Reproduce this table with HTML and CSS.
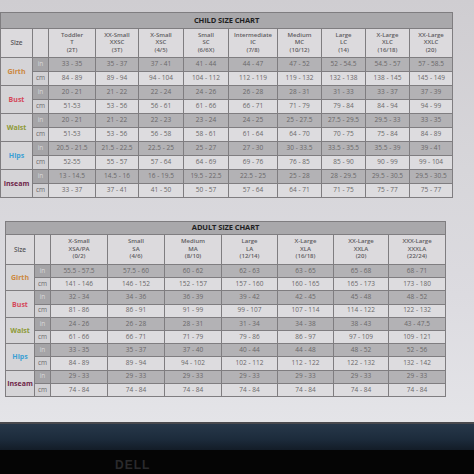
FILE: index.html
```html
<!DOCTYPE html>
<html>
<head>
<meta charset="utf-8">
<link rel="stylesheet" href="styles.css">
</head>
<body>
<div class="screen">
  <table class="chart child">
    <colgroup>
      <col style="width:32px"><col style="width:16px">
      <col style="width:47px"><col style="width:43px"><col style="width:45px"><col style="width:45px"><col style="width:49px"><col style="width:44px"><col style="width:44px"><col style="width:44px"><col style="width:43px">
    </colgroup>
    <tr class="title"><td colspan="11">CHILD SIZE CHART</td></tr>
    <tr class="head">
      <td class="size">Size</td><td class="blank"></td>
      <td>Toddler<br>T<br>(2T)</td>
      <td>XX-Small<br>XXSC<br>(3T)</td>
      <td>X-Small<br>XSC<br>(4/5)</td>
      <td>Small<br>SC<br>(6/6X)</td>
      <td>Intermediate<br>IC<br>(7/8)</td>
      <td>Medium<br>MC<br>(10/12)</td>
      <td>Large<br>LC<br>(14)</td>
      <td>X-Large<br>XLC<br>(16/18)</td>
      <td>XX-Large<br>XXLC<br>(20)</td>
    </tr>
    <tr class="in"><td rowspan="2" class="lab girth">Girth</td><td class="u">in</td><td>33 - 35</td><td>35 - 37</td><td>37 - 41</td><td>41 - 44</td><td>44 - 47</td><td>47 - 52</td><td>52 - 54.5</td><td>54.5 - 57</td><td>57 - 58.5</td></tr>
    <tr class="cm"><td class="u">cm</td><td>84 - 89</td><td>89 - 94</td><td>94 - 104</td><td>104 - 112</td><td>112 - 119</td><td>119 - 132</td><td>132 - 138</td><td>138 - 145</td><td>145 - 149</td></tr>
    <tr class="in"><td rowspan="2" class="lab bust">Bust</td><td class="u">in</td><td>20 - 21</td><td>21 - 22</td><td>22 - 24</td><td>24 - 26</td><td>26 - 28</td><td>28 - 31</td><td>31 - 33</td><td>33 - 37</td><td>37 - 39</td></tr>
    <tr class="cm"><td class="u">cm</td><td>51-53</td><td>53 - 56</td><td>56 - 61</td><td>61 - 66</td><td>66 - 71</td><td>71 - 79</td><td>79 - 84</td><td>84 - 94</td><td>94 - 99</td></tr>
    <tr class="in"><td rowspan="2" class="lab waist">Waist</td><td class="u">in</td><td>20 - 21</td><td>21 - 22</td><td>22 - 23</td><td>23 - 24</td><td>24 - 25</td><td>25 - 27.5</td><td>27.5 - 29.5</td><td>29.5 - 33</td><td>33 - 35</td></tr>
    <tr class="cm"><td class="u">cm</td><td>51-53</td><td>53 - 56</td><td>56 - 58</td><td>58 - 61</td><td>61 - 64</td><td>64 - 70</td><td>70 - 75</td><td>75 - 84</td><td>84 - 89</td></tr>
    <tr class="in"><td rowspan="2" class="lab hips">Hips</td><td class="u">in</td><td>20.5 - 21.5</td><td>21.5 - 22.5</td><td>22.5 - 25</td><td>25 - 27</td><td>27 - 30</td><td>30 - 33.5</td><td>33.5 - 35.5</td><td>35.5 - 39</td><td>39 - 41</td></tr>
    <tr class="cm"><td class="u">cm</td><td>52-55</td><td>55 - 57</td><td>57 - 64</td><td>64 - 69</td><td>69 - 76</td><td>76 - 85</td><td>85 - 90</td><td>90 - 99</td><td>99 - 104</td></tr>
    <tr class="in"><td rowspan="2" class="lab inseam">Inseam</td><td class="u">in</td><td>13 - 14.5</td><td>14.5 - 16</td><td>16 - 19.5</td><td>19.5 - 22.5</td><td>22.5 - 25</td><td>25 - 28</td><td>28 - 29.5</td><td>29.5 - 30.5</td><td>29.5 - 30.5</td></tr>
    <tr class="cm"><td class="u">cm</td><td>33 - 37</td><td>37 - 41</td><td>41 - 50</td><td>50 - 57</td><td>57 - 64</td><td>64 - 71</td><td>71 - 75</td><td>75 - 77</td><td>75 - 77</td></tr>
  </table>

  <table class="chart adult">
    <colgroup>
      <col style="width:29px"><col style="width:16px">
      <col style="width:57px"><col style="width:57px"><col style="width:57px"><col style="width:56px"><col style="width:56px"><col style="width:55px"><col style="width:57px">
    </colgroup>
    <tr class="title"><td colspan="9">ADULT SIZE CHART</td></tr>
    <tr class="head">
      <td class="size">Size</td><td class="blank"></td>
      <td>X-Small<br>XSA/PA<br>(0/2)</td>
      <td>Small<br>SA<br>(4/6)</td>
      <td>Medium<br>MA<br>(8/10)</td>
      <td>Large<br>LA<br>(12/14)</td>
      <td>X-Large<br>XLA<br>(16/18)</td>
      <td>XX-Large<br>XXLA<br>(20)</td>
      <td>XXX-Large<br>XXXLA<br>(22/24)</td>
    </tr>
    <tr class="in"><td rowspan="2" class="lab girth">Girth</td><td class="u">in</td><td>55.5 - 57.5</td><td>57.5 - 60</td><td>60 - 62</td><td>62 - 63</td><td>63 - 65</td><td>65 - 68</td><td>68 - 71</td></tr>
    <tr class="cm"><td class="u">cm</td><td>141 - 146</td><td>146 - 152</td><td>152 - 157</td><td>157 - 160</td><td>160 - 165</td><td>165 - 173</td><td>173 - 180</td></tr>
    <tr class="in"><td rowspan="2" class="lab bust">Bust</td><td class="u">in</td><td>32 - 34</td><td>34 - 36</td><td>36 - 39</td><td>39 - 42</td><td>42 - 45</td><td>45 - 48</td><td>48 - 52</td></tr>
    <tr class="cm"><td class="u">cm</td><td>81 - 86</td><td>86 - 91</td><td>91 - 99</td><td>99 - 107</td><td>107 - 114</td><td>114 - 122</td><td>122 - 132</td></tr>
    <tr class="in"><td rowspan="2" class="lab waist">Waist</td><td class="u">in</td><td>24 - 26</td><td>26 - 28</td><td>28 - 31</td><td>31 - 34</td><td>34 - 38</td><td>38 - 43</td><td>43 - 47.5</td></tr>
    <tr class="cm"><td class="u">cm</td><td>61 - 66</td><td>66 - 71</td><td>71 - 79</td><td>79 - 86</td><td>86 - 97</td><td>97 - 109</td><td>109 - 121</td></tr>
    <tr class="in"><td rowspan="2" class="lab hips">Hips</td><td class="u">in</td><td>33 - 35</td><td>35 - 37</td><td>37 - 40</td><td>40 - 44</td><td>44 - 48</td><td>48 - 52</td><td>52 - 56</td></tr>
    <tr class="cm"><td class="u">cm</td><td>84 - 89</td><td>89 - 94</td><td>94 - 102</td><td>102 - 112</td><td>112 - 122</td><td>122 - 132</td><td>132 - 142</td></tr>
    <tr class="in"><td rowspan="2" class="lab inseam">Inseam</td><td class="u">in</td><td>29 - 33</td><td>29 - 33</td><td>29 - 33</td><td>29 - 33</td><td>29 - 33</td><td>29 - 33</td><td>29 - 33</td></tr>
    <tr class="cm"><td class="u">cm</td><td>74 - 84</td><td>74 - 84</td><td>74 - 84</td><td>74 - 84</td><td>74 - 84</td><td>74 - 84</td><td>74 - 84</td></tr>
  </table>
</div>
<div class="bezel"></div>
<div class="base"><span class="logo">DELL</span></div>
</body>
</html>
```

FILE: styles.css
```css
html, body {
  margin: 0;
  padding: 0;
  background: #000;
  width: 474px;
  height: 474px;
  overflow: hidden;
  font-family: "Open Sans", "Liberation Sans", sans-serif;
}
.screen {
  height: 410px;
  padding-top: 12px;
  background: linear-gradient(180deg, #cfcdd1 0%, #d7d6da 40%, #dcdbe0 70%, #e4e4e8 100%);
  width: 474px;
}
.chart {
  border-collapse: collapse;
  table-layout: fixed;
  font-size: 6.5px;
  color: #6a6869;
  text-align: center;
}
.chart td {
  border: 1px solid #7f7d80;
  padding: 0;
  line-height: 1;
  white-space: nowrap;
  overflow: hidden;
}
.child {
  width: 452px;
}
.adult {
  width: 440px;
  margin-left: 5px;
  margin-top: 23px;
}
.title td {
  background: #a9a8ab;
  color: #1f1f22;
  font-weight: 700;
  font-size: 7.5px;
  letter-spacing: -0.1px;
}
.child .title td { height: 15px; }
.adult .title td { height: 12px; }
.head td {
  background: #dcdadd;
  color: #5e5c5f;
  font-weight: 600;
  font-size: 6px;
  line-height: 7.5px;
}
.child .head td { height: 28px; }
.adult .head td { height: 29px; }
.head .size { color: #5a585b; font-size: 6.5px; }
.child tr.in td, .child tr.cm td { height: 13px; }
.adult tr.in td, .adult tr.cm td { height: 12.2px; }
tr.in td { background: #b3b2b5; }
tr.cm td { background: #dddcdf; }
tr.in td.u { background: #a5a4a7; color: #d8d8da; }
tr.cm td.u { background: #d2d1d4; color: #6a686b; }
.chart td.lab {
  background: #d5d4d7;
  font-weight: 700;
  font-size: 7px;
}
.girth { color: #cc8840 !important; }
.bust { color: #d4485a !important; }
.waist { color: #8e9a38 !important; }
.hips { color: #3c9fd4 !important; }
.inseam { color: #6e2448 !important; }
.bezel {
  height: 26px;
  background: linear-gradient(180deg, #27384a 0%, #1c2b3b 60%, #131c27 100%);
  border-top: 2px solid #4a4a4e;
}
.base {
  height: 24px;
  background: #050505;
  position: relative;
}
.logo {
  position: absolute;
  left: 115px;
  top: 8px;
  color: #2a2a2c;
  font-family: "Liberation Sans", sans-serif;
  font-weight: 700;
  font-size: 12px;
  line-height: 14px;
  letter-spacing: 1px;
}
```
